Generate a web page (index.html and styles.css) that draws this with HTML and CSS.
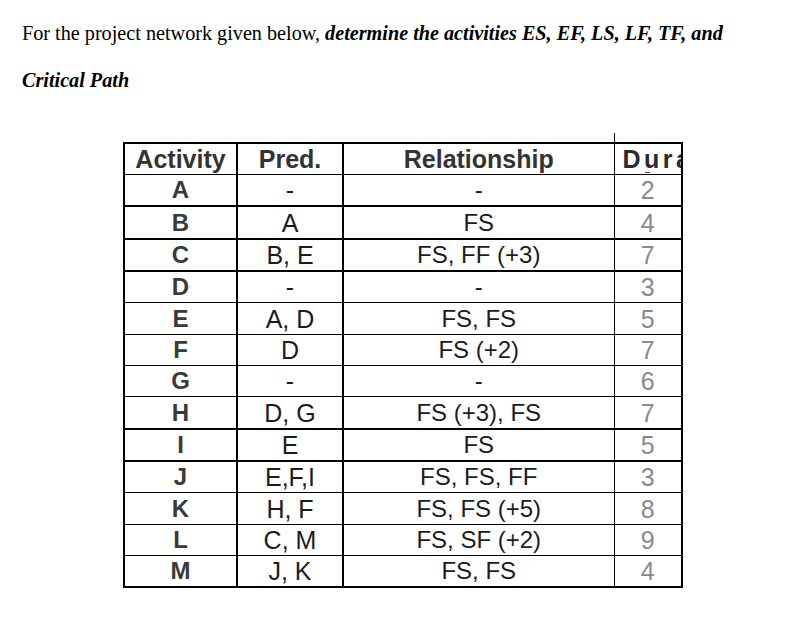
FILE: index.html
```html
<!DOCTYPE html>
<html>
<head>
<meta charset="utf-8">
<link rel="stylesheet" href="styles.css">
</head>
<body>
<div class="question">
  <p class="line">For the project network given below, <b><i>determine the activities ES, EF, LS, LF, TF, and</i></b></p>
  <p class="line line2"><b><i>Critical Path</i></b></p>
</div>
<div class="table-wrap">
  <table class="net">
    <colgroup>
      <col class="c-act"><col class="c-pred"><col class="c-rel"><col class="c-dur">
    </colgroup>
    <thead>
      <tr class="head">
        <th>Activity</th><th>Pred.</th><th>Relationship</th><th class="dur-h"><span class="dur-label">Duration</span><span class="dur-dash"></span><span class="dur-tick"></span></th>
      </tr>
    </thead>
    <tbody>
      <tr class="thick"><td class="act">A</td><td class="pred">-</td><td>-</td><td class="dur">2</td></tr>
      <tr class="thick"><td class="act">B</td><td class="pred">A</td><td>FS</td><td class="dur">4</td></tr>
      <tr class="thick"><td class="act">C</td><td class="pred">B, E</td><td>FS, FF (+3)</td><td class="dur">7</td></tr>
      <tr><td class="act">D</td><td class="pred">-</td><td>-</td><td class="dur">3</td></tr>
      <tr><td class="act">E</td><td class="pred">A, D</td><td>FS, FS</td><td class="dur">5</td></tr>
      <tr><td class="act">F</td><td class="pred">D</td><td>FS (+2)</td><td class="dur">7</td></tr>
      <tr><td class="act">G</td><td class="pred">-</td><td>-</td><td class="dur">6</td></tr>
      <tr class="thick"><td class="act">H</td><td class="pred">D, G</td><td>FS (+3), FS</td><td class="dur">7</td></tr>
      <tr class="thick"><td class="act">I</td><td class="pred">E</td><td>FS</td><td class="dur">5</td></tr>
      <tr><td class="act">J</td><td class="pred">E,F,I</td><td>FS, FS, FF</td><td class="dur">3</td></tr>
      <tr><td class="act">K</td><td class="pred">H, F</td><td>FS, FS (+5)</td><td class="dur">8</td></tr>
      <tr><td class="act">L</td><td class="pred">C, M</td><td>FS, SF (+2)</td><td class="dur">9</td></tr>
      <tr class="last"><td class="act">M</td><td class="pred">J, K</td><td>FS, FS</td><td class="dur">4</td></tr>
    </tbody>
  </table>
</div>
</body>
</html>
```

FILE: styles.css
```css
html, body {
  margin: 0;
  padding: 0;
  background: #ffffff;
}

.question {
  padding: 22px 0 0 22px;
  font-family: "Liberation Serif", "Times New Roman", serif;
  font-size: 20.2px;
  color: #000;
}

.line {
  margin: 0;
  line-height: 23px;
}

.line2 {
  margin-top: 24px;
}

.table-wrap {
  padding: 50px 0 0 123px;
}

.net {
  border-collapse: collapse;
  table-layout: fixed;
  width: 558px;
  font-family: "Liberation Sans", Arial, sans-serif;
  border: 2px solid #000;
}

.c-act { width: 113px; }
.c-pred { width: 106px; }
.c-rel { width: 271px; }
.c-dur { width: 68px; }

.net th,
.net td {
  padding: 0;
  text-align: center;
  vertical-align: middle;
  border-left: 2px solid #000;
  border-top: 1px solid #000;
  height: 30.35px;
  line-height: 26px;
  white-space: nowrap;
}

.net th:last-child,
.net td:last-child {
  border-left: 1px solid #000;
}

.net th {
  font-size: 25px;
  font-weight: bold;
  color: #333333;
  border-top: 2px solid #000;
  height: 30px;
}

.net td {
  font-size: 24px;
  color: #1c1c1c;
}

.net tr.thick td {
  border-bottom: 2px solid #000;
}

.net td.act {
  font-weight: bold;
  color: #3a3a3a;
  font-size: 24px;
}

.net td.pred {
  font-size: 25px;
}

.net td.dur {
  color: #8a8a8a;
  font-size: 25px;
}

.dur-h {
  position: relative;
  text-align: left !important;
  color: #2b2b2b !important;
}

.dur-label {
  display: block;
  width: 58px;
  margin-left: 8px;
  overflow: hidden;
  letter-spacing: 3.5px;
}

.dur-dash {
  position: absolute;
  left: 30px;
  bottom: 1px;
  width: 5px;
  height: 1px;
  background: #444;
}

.dur-tick {
  position: absolute;
  left: -1px;
  top: -11px;
  width: 1px;
  height: 9px;
  background: #000;
}
```
